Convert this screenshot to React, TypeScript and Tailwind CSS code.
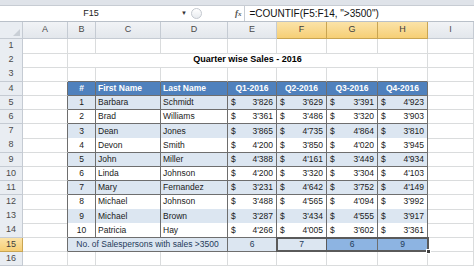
import React from 'react';

type Rep = { n: number; first: string; last: string; q: string[] };

const reps: Rep[] = [
  { n: 1, first: 'Barbara', last: 'Schmidt', q: ["3'826", "3'629", "3'391", "4'923"] },
  { n: 2, first: 'Brad', last: 'Williams', q: ["3'361", "3'486", "3'320", "3'903"] },
  { n: 3, first: 'Dean', last: 'Jones', q: ["3'865", "4'735", "4'864", "3'810"] },
  { n: 4, first: 'Devon', last: 'Smith', q: ["4'200", "3'850", "4'020", "3'945"] },
  { n: 5, first: 'John', last: 'Miller', q: ["4'388", "4'161", "3'449", "4'934"] },
  { n: 6, first: 'Linda', last: 'Johnson', q: ["4'200", "3'320", "3'304", "4'103"] },
  { n: 7, first: 'Mary', last: 'Fernandez', q: ["3'231", "4'642", "3'752", "4'149"] },
  { n: 8, first: 'Michael', last: 'Johnson', q: ["3'488", "4'565", "4'094", "3'992"] },
  { n: 9, first: 'Michael', last: 'Brown', q: ["3'287", "3'434", "4'555", "3'917"] },
  { n: 10, first: 'Patricia', last: 'Hay', q: ["4'266", "4'005", "3'602", "3'361"] },
];

const rowCls =
  'grid grid-cols-[23px_45px_28px_65px_67px_49px_50px_51px_50px_1fr] h-[14.2px]';

// plain grid cell
const G = 'border-r border-b border-[#dadcdd] min-w-0';
// table cell
const T = 'border-r border-b border-[#6e6e6e] min-w-0 flex items-center overflow-hidden whitespace-nowrap';

function RowHead({ n, active }: { n: number; active?: boolean }) {
  return (
    <div
      className={
        'flex items-center justify-center border-r border-b text-[9px] ' +
        (active
          ? 'bg-gradient-to-b from-[#fbe3a8] to-[#f6cf75] border-[#c9a552] text-[#3d3d3d]'
          : 'bg-[#e9edf2] border-[#c5cbd3] text-[#4a4a4a]')
      }
    >
      {n}
    </div>
  );
}

function Money({ v, bg }: { v: string; bg: string }) {
  return (
    <div className={T + ' justify-between px-[3px] ' + bg}>
      <span>$</span>
      <span>{v}</span>
    </div>
  );
}

export default function App() {
  const cols = ['A', 'B', 'C', 'D', 'E', 'F', 'G', 'H', 'I'];
  return (
    <main
      className="w-[474px] h-[267px] overflow-hidden bg-white text-[8.5px] text-[#1a1a1a]"
      style={{ fontFamily: '"Liberation Sans", Arial, sans-serif' }}
    >
      {/* Formula bar */}
      <div className="h-[22px] bg-[#dfe3e9] pt-[5px] border-b border-[#b9c0c9]">
        <div className="h-[16px] bg-white flex items-center border-t border-[#c7ccd3]">
          <div className="w-[178px] flex justify-center text-[9px] text-[#222] pl-[4px]">F15</div>
          <span className="text-[6px] text-[#333] ml-[3px]">▼</span>
          <div className="ml-[4px] w-[11px] h-[11px] rounded-full border border-[#c3c8cf] bg-gradient-to-b from-white to-[#e8ebef]" />
          <div className="w-[33px]" />
          <span className="italic font-bold text-[9px] text-[#555]" style={{ fontFamily: '"Liberation Serif", serif' }}>
            f<span className="text-[7px]">x</span>
          </span>
          <div className="ml-[3px] h-full border-l border-[#c7ccd3] pl-[4px] flex items-center text-[10px] text-[#111]">
            =COUNTIF(F5:F14, "&gt;3500")
          </div>
        </div>
      </div>

      {/* Column headers */}
      <div className="grid grid-cols-[23px_45px_28px_65px_67px_49px_50px_51px_50px_1fr] h-[17px]">
        <div className="bg-[#e9edf2] border-r border-b border-[#c5cbd3] flex items-end justify-end p-[2px]">
          <div className="w-0 h-0 border-l-[7px] border-l-transparent border-b-[7px] border-b-[#c9cfd6]" />
        </div>
        {cols.map((c) => {
          const sel = c === 'F' || c === 'G' || c === 'H';
          return (
            <div
              key={c}
              className={
                'flex items-center justify-center border-r border-b text-[9px] ' +
                (sel
                  ? 'bg-gradient-to-b from-[#fbe3a8] to-[#f6cf75] border-[#c9a552] text-[#3d3d3d]'
                  : 'bg-gradient-to-b from-[#f1f3f6] to-[#e3e7ec] border-[#c5cbd3] text-[#4a4a4a]')
              }
            >
              {c}
            </div>
          );
        })}
      </div>

      {/* Row 1 */}
      <div className={rowCls}>
        <RowHead n={1} />
        {cols.map((c) => (
          <div key={c} className={G} />
        ))}
      </div>

      {/* Row 2 - title */}
      <div className={rowCls}>
        <RowHead n={2} />
        <div className={G} />
        <div className={G + ' col-span-7 flex items-center justify-center font-bold text-[9px] text-black'}>
          Quarter wise Sales - 2016
        </div>
        <div className={G} />
      </div>

      {/* Row 3 */}
      <div className={rowCls}>
        <RowHead n={3} />
        <div className={G} />
        {['B', 'C', 'D', 'E', 'F', 'G', 'H'].map((c) => (
          <div key={c} className="border-r border-r-[#dadcdd] border-b border-b-[#6e6e6e]" />
        ))}
        <div className={G} />
      </div>

      {/* Row 4 - table header */}
      <div className={rowCls}>
        <RowHead n={4} />
        <div className="border-r border-r-[#6e6e6e] border-b border-b-[#dadcdd]" />
        <div className={T + ' bg-[#4f81bd] text-white font-bold justify-center'}>#</div>
        <div className={T + ' bg-[#4f81bd] text-white font-bold px-[2px]'}>First Name</div>
        <div className={T + ' bg-[#4f81bd] text-white font-bold px-[2px]'}>Last Name</div>
        {['Q1-2016', 'Q2-2016', 'Q3-2016', 'Q4-2016'].map((q) => (
          <div key={q} className={T + ' bg-[#4f81bd] text-white font-bold justify-center'}>
            {q}
          </div>
        ))}
        <div className={G} />
      </div>

      {/* Data rows */}
      {reps.map((r, i) => {
        const bg = i % 2 === 0 ? 'bg-[#dce6f1]' : 'bg-white';
        return (
          <div key={r.n} className={rowCls}>
            <RowHead n={i + 5} />
            <div className="border-r border-r-[#6e6e6e] border-b border-b-[#dadcdd]" />
            <div className={T + ' justify-center ' + bg}>{r.n}</div>
            <div className={T + ' px-[2px] ' + bg}>{r.first}</div>
            <div className={T + ' px-[2px] ' + bg}>{r.last}</div>
            {r.q.map((v, k) => (
              <Money key={k} v={v} bg={bg} />
            ))}
            <div className={G} />
          </div>
        );
      })}

      {/* Row 15 - totals */}
      <div className={rowCls + ' relative'}>
        <RowHead n={15} active />
        <div className="border-r border-r-[#6e6e6e] border-b border-b-[#dadcdd]" />
        <div className={T + ' col-span-3 justify-center bg-[#dce6f1] text-[#1f3b5a]'}>
          No. of Salespersons with sales &gt;3500
        </div>
        <div className={T + ' justify-center bg-[#dce6f1] text-[#1f3b5a]'}>6</div>
        <div className={T + ' justify-center bg-[#dce6f1] text-[#1f3b5a]'}>7</div>
        <div className={T + ' justify-center bg-[#8db4e2] text-[#1f3b5a]'}>6</div>
        <div className={T + ' justify-center bg-[#8db4e2] text-[#1f3b5a]'}>9</div>
        <div className={G} />
        {/* selection frame F15:H15 */}
        <div className="absolute left-[276px] top-[-1px] w-[153px] h-[15.2px] border-2 border-[#5a5a5a] pointer-events-none" />
        <div className="absolute left-[326px] top-[1px] w-[1px] h-[12px] bg-[#5a5a5a]" />
        <div className="absolute left-[426px] top-[11px] w-[5px] h-[5px] bg-[#3f3f3f] border border-white" />
      </div>

      {/* Row 16 */}
      <div className={rowCls}>
        <RowHead n={16} />
        {cols.map((c) => (
          <div key={c} className={G} />
        ))}
      </div>
    </main>
  );
}
